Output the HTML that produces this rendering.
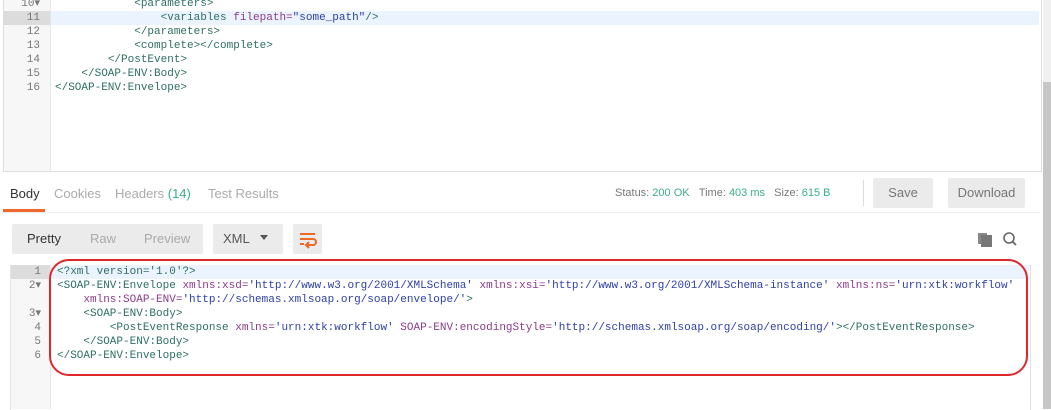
<!DOCTYPE html>
<html><head><style>
body{margin:0;width:1051px;height:409px;background:#fff;position:relative;overflow:hidden;font-family:"Liberation Sans",sans-serif}
.code{font-family:"Liberation Mono",monospace;font-size:11px;line-height:14px;white-space:pre;color:#2e6f62}
.t{color:#2e6f62}.a{color:#8b3b8b}.v{color:#2d3fa8}
.gut{position:absolute;background:#f7f7f7;border-right:1px solid #e6e6e6;color:#777;text-align:right;font-family:"Liberation Mono",monospace;font-size:11px;line-height:14px}
.abs{position:absolute}
</style></head><body>
<!-- top editor -->
<div class="abs" style="left:3px;top:0;width:1037px;height:171px;border:1px solid #ddd;border-top:none;background:#fff"></div>
<div class="gut" style="left:4px;top:0;width:46px;height:171px"></div>
<div class="abs" style="left:4px;top:11px;width:46px;height:14px;background:#dcdcdc"></div>
<div class="abs" style="left:51px;top:11px;width:988px;height:14px;background:#eaf3fe"></div>
<div class="abs code" style="left:4px;top:-3px;width:36px;text-align:right;color:#777">10▾
11
12
13
14
15
16</div>
<div class="abs code" style="left:55px;top:-3px">            <span class="t">&lt;parameters&gt;</span>
                <span class="t">&lt;variables</span> <span class="a">filepath=</span><span class="v">"some_path"</span><span class="t">/&gt;</span>
            <span class="t">&lt;/parameters&gt;</span>
            <span class="t">&lt;complete&gt;&lt;/complete&gt;</span>
        <span class="t">&lt;/PostEvent&gt;</span>
    <span class="t">&lt;/SOAP-ENV:Body&gt;</span>
<span class="t">&lt;/SOAP-ENV:Envelope&gt;</span></div>
<!-- scrollbar -->
<div class="abs" style="left:1043px;top:0;width:8px;height:409px;background:#f0f0f0"></div>
<div class="abs" style="left:1043px;top:82px;width:8px;height:327px;background:#c6c6c6"></div>
<!-- tabs -->
<div class="abs" style="left:0;top:186px;font-size:13px;color:#aaa;white-space:nowrap">
<span style="position:absolute;left:10px;color:#333">Body</span>
<span style="position:absolute;left:54px">Cookies</span>
<span style="position:absolute;left:115px">Headers <span style="color:#3aaf85">(14)</span></span>
<span style="position:absolute;left:208px">Test Results</span></div>
<div class="abs" style="left:3px;top:209px;width:42px;height:3px;background:#f0672a"></div>
<div class="abs" style="left:0;top:212px;width:1040px;height:1px;background:#eee"></div>
<div class="abs" style="left:615px;top:187px;font-size:11px;color:#777;white-space:nowrap">Status: <span style="color:#3aaf85">200 OK</span>&nbsp;&nbsp;&nbsp;Time: <span style="color:#3aaf85">403 ms</span>&nbsp;&nbsp;&nbsp;Size: <span style="color:#3aaf85">615 B</span></div>
<div class="abs" style="left:863px;top:180px;width:1px;height:26px;background:#ddd"></div>
<div class="abs" style="left:873px;top:178px;width:60px;height:30px;background:#ebebeb;border-radius:2px;font-size:13px;color:#777;text-align:center;line-height:30px">Save</div>
<div class="abs" style="left:948px;top:178px;width:77px;height:30px;background:#ebebeb;border-radius:2px;font-size:13px;color:#777;text-align:center;line-height:30px">Download</div>
<!-- toolbar -->
<div class="abs" style="left:12px;top:224px;width:191px;height:30px;background:#ebebeb;border-radius:2px;font-size:13px;line-height:30px;color:#aaa">
<span style="position:absolute;left:15px;color:#333">Pretty</span><span style="position:absolute;left:78px">Raw</span><span style="position:absolute;left:132px">Preview</span></div>
<div class="abs" style="left:213px;top:224px;width:70px;height:30px;background:#ebebeb;border-radius:2px;font-size:13px;line-height:30px;color:#555"><span style="position:absolute;left:10px">XML</span><span style="position:absolute;left:47px;top:11px;border:4px solid transparent;border-top:5px solid #555;width:0;height:0;line-height:0"></span></div>
<div class="abs" style="left:293px;top:224px;width:29px;height:30px;background:#ebebeb;border-radius:2px">
<svg width="29" height="30"><g stroke="#f0672a" stroke-width="2" fill="none"><path d="M7 10H22M7 15H20a3 3 0 0 1 0 6H14M7 20H11"/><path d="M16 18l-3 3 3 3"/></g></svg></div>
<svg class="abs" style="left:977px;top:231px" width="40" height="18"><rect x="1" y="2" width="9" height="11" fill="#888"/><rect x="4" y="4" width="11" height="12" fill="#777"/><circle cx="32" cy="7" r="5" stroke="#666" stroke-width="1.6" fill="none"/><path d="M35.5 10.5L39 14" stroke="#666" stroke-width="1.8"/></svg>
<!-- bottom editor -->
<div class="abs" style="left:10px;top:265px;width:1019px;height:144px;border:1px solid #e3e3e3;border-bottom:none"></div>
<div class="gut" style="left:11px;top:265px;width:39px;height:144px"></div>
<div class="abs" style="left:11px;top:265px;width:39px;height:14px;background:#dcdcdc"></div>
<div class="abs" style="left:51px;top:265px;width:978px;height:14px;background:#eaf3fe"></div>
<div class="abs code" style="left:11px;top:265px;width:30px;text-align:right;color:#777">1
2▾

3▾
4
5
6</div>
<div class="abs code" style="left:57px;top:265px"><span class="t">&lt;?xml version='1.0'?&gt;</span>
<span class="t">&lt;SOAP-ENV:Envelope</span> <span class="a">xmlns:xsd=</span><span class="v">'http://www.w3.org/2001/XMLSchema'</span> <span class="a">xmlns:xsi=</span><span class="v">'http://www.w3.org/2001/XMLSchema-instance'</span> <span class="a">xmlns:ns=</span><span class="v">'urn:xtk:workflow'</span>
    <span class="a">xmlns:SOAP-ENV=</span><span class="v">'http://schemas.xmlsoap.org/soap/envelope/'</span><span class="t">&gt;</span>
    <span class="t">&lt;SOAP-ENV:Body&gt;</span>
        <span class="t">&lt;PostEventResponse</span> <span class="a">xmlns=</span><span class="v">'urn:xtk:workflow'</span> <span class="a">SOAP-ENV:encodingStyle=</span><span class="v">'http://schemas.xmlsoap.org/soap/encoding/'</span><span class="t">&gt;&lt;/PostEventResponse&gt;</span>
    <span class="t">&lt;/SOAP-ENV:Body&gt;</span>
<span class="t">&lt;/SOAP-ENV:Envelope&gt;</span></div>
<div class="abs" style="left:49px;top:259px;width:975px;height:113px;border:2px solid #e0282b;border-radius:20px"></div>
</body></html>
